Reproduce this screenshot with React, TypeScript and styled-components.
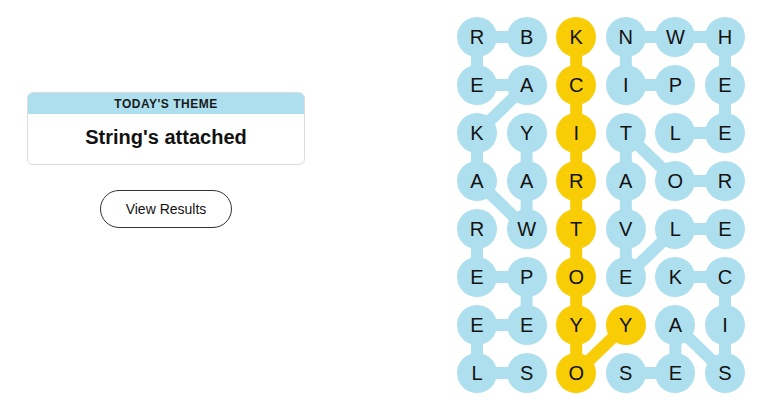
import styled, { createGlobalStyle } from "styled-components";

const GlobalStyle = createGlobalStyle`
  html, body {
    margin: 0;
    padding: 0;
    background: #ffffff;
  }
  body {
    font-family: "Liberation Sans", Arial, sans-serif;
    color: #121212;
  }
`;

const BLUE = "#aedfee";
const YELLOW = "#f8cd05";

const COLS = 6;
const CELL = 40;
const COL_GAP = 9.6;
const ROW_GAP = 8;

const LETTERS = [
  "RBKNWH",
  "EACIPE",
  "KYITLE",
  "AARAOR",
  "RWTVLE",
  "EPOEKC",
  "EEYYAI",
  "LSOSES",
];

type Cell = [number, number];

// each found word as its path through the board, [row, col]
const WORDS: { path: Cell[]; spangram?: boolean }[] = [
  { path: [[0, 1], [0, 0], [1, 0], [1, 1], [2, 0], [3, 0], [4, 1], [3, 1], [2, 1]] },
  { path: [[1, 4], [1, 3], [0, 3], [0, 4], [0, 5], [1, 5], [2, 5], [2, 4]] },
  { path: [[4, 5], [4, 4], [5, 3], [4, 3], [3, 3], [2, 3], [3, 4], [3, 5]] },
  { path: [[7, 1], [7, 0], [6, 0], [6, 1], [5, 1], [5, 0], [4, 0]] },
  { path: [[7, 3], [7, 4], [6, 4], [7, 5], [6, 5], [5, 5], [5, 4]] },
  {
    path: [[6, 3], [7, 2], [6, 2], [5, 2], [4, 2], [3, 2], [2, 2], [1, 2], [0, 2]],
    spangram: true,
  },
];

const spangramCells = new Set(
  WORDS.filter((w) => w.spangram).flatMap((w) => w.path.map(([r, c]) => `${r}-${c}`))
);

const BOARD_W = COLS * CELL + (COLS - 1) * COL_GAP;
const BOARD_H = LETTERS.length * CELL + (LETTERS.length - 1) * ROW_GAP;

const cx = (c: number) => c * (CELL + COL_GAP) + CELL / 2;
const cy = (r: number) => r * (CELL + ROW_GAP) + CELL / 2;

const Page = styled.main`
  display: flex;
  justify-content: space-between;
  align-items: flex-start;
  padding: 17px 23px 0 27px;
`;

const Sidebar = styled.section`
  width: 278px;
  margin-top: 75px;
  display: flex;
  flex-direction: column;
  align-items: center;
`;

const ThemeCard = styled.div`
  width: 100%;
  box-sizing: border-box;
  border: 1px solid #dcdcdc;
  border-radius: 6px;
  overflow: hidden;
  background: #fff;
`;

const ThemeLabel = styled.div`
  height: 21px;
  background: ${BLUE};
  display: flex;
  align-items: center;
  justify-content: center;
  font-size: 12px;
  font-weight: 700;
  letter-spacing: 0.5px;
  color: #1a1a1a;
`;

const ThemeTitle = styled.div`
  height: 50px;
  display: flex;
  align-items: center;
  justify-content: center;
  font-size: 20px;
  font-weight: 700;
  color: #121212;
  padding-bottom: 3px;
  box-sizing: border-box;
`;

const ResultsButton = styled.button`
  margin-top: 25px;
  width: 132px;
  height: 38px;
  border: 1px solid #333;
  border-radius: 19px;
  background: #fff;
  font-family: "Liberation Sans", Arial, sans-serif;
  font-size: 14px;
  color: #121212;
  cursor: pointer;
`;

const Board = styled.div`
  position: relative;
  width: ${BOARD_W}px;
  height: ${BOARD_H}px;
`;

const Links = styled.svg`
  position: absolute;
  inset: 0;
  overflow: visible;
`;

const LetterGrid = styled.div`
  position: relative;
  display: grid;
  grid-template-columns: repeat(${COLS}, ${CELL}px);
  grid-auto-rows: ${CELL}px;
  column-gap: ${COL_GAP}px;
  row-gap: ${ROW_GAP}px;
`;

const Letter = styled.div<{ $span?: boolean }>`
  width: ${CELL}px;
  height: ${CELL}px;
  border-radius: 50%;
  background: ${(p) => (p.$span ? YELLOW : BLUE)};
  display: flex;
  align-items: center;
  justify-content: center;
  font-size: 20px;
  color: #121212;
  user-select: none;
`;

export default function App() {
  return (
    <>
      <GlobalStyle />
      <Page>
        <Sidebar>
          <ThemeCard>
            <ThemeLabel>TODAY'S THEME</ThemeLabel>
            <ThemeTitle>String's attached</ThemeTitle>
          </ThemeCard>
          <ResultsButton>View Results</ResultsButton>
        </Sidebar>
        <Board>
          <Links width={BOARD_W} height={BOARD_H}>
            {WORDS.map((w, i) =>
              w.path.slice(1).map(([r, c], j) => {
                const [pr, pc] = w.path[j];
                return (
                  <line
                    key={`${i}-${j}`}
                    x1={cx(pc)}
                    y1={cy(pr)}
                    x2={cx(c)}
                    y2={cy(r)}
                    stroke={w.spangram ? YELLOW : BLUE}
                    strokeWidth={12}
                  />
                );
              })
            )}
          </Links>
          <LetterGrid>
            {LETTERS.flatMap((row, r) =>
              row.split("").map((ch, c) => (
                <Letter key={`${r}-${c}`} $span={spangramCells.has(`${r}-${c}`)}>
                  {ch}
                </Letter>
              ))
            )}
          </LetterGrid>
        </Board>
      </Page>
    </>
  );
}
